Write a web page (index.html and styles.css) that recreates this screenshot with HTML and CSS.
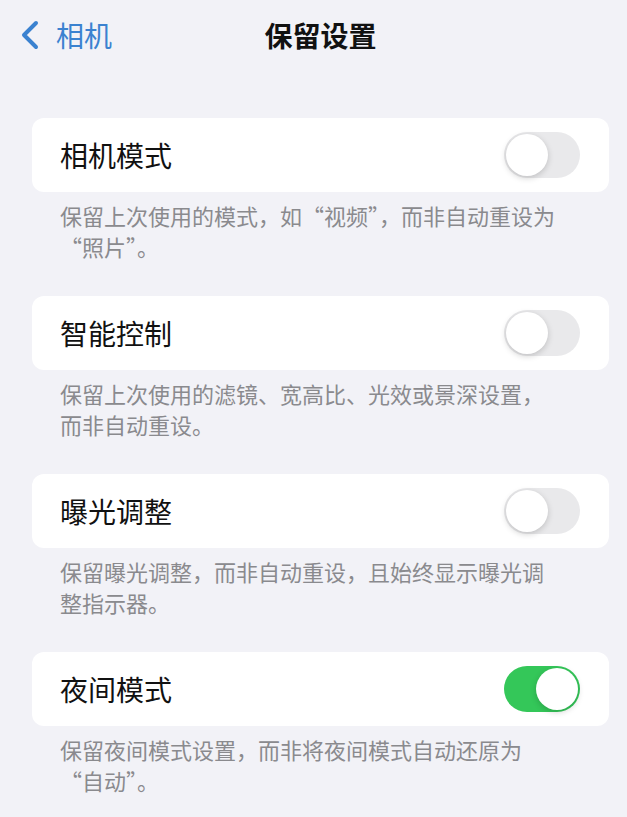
FILE: index.html
```html
<!DOCTYPE html>
<html lang="zh-CN">
<head>
    <meta charset="UTF-8">
    <meta name="viewport" content="width=device-width, initial-scale=1.0">
    <title>保留设置</title>
    <link rel="stylesheet" href="styles.css">
</head>
<body>
    <header class="nav">
        <a class="back" href="#">
            <svg class="chevron" width="20" height="30" viewBox="0 0 20 30">
                <path d="M16 3 L4 15 L16 27" fill="none" stroke="currentColor" stroke-width="4" stroke-linecap="round" stroke-linejoin="round"/>
            </svg>
            <span>相机</span>
        </a>
        <h1 class="title">保留设置</h1>
    </header>

    <main class="list">
        <section class="group">
            <div class="card">
                <span class="label">相机模式</span>
                <span class="toggle"><span class="knob"></span></span>
            </div>
            <p class="note">保留上次使用的模式，如“视频”，而非自动重设为<br>“照片”。</p>
        </section>

        <section class="group">
            <div class="card">
                <span class="label">智能控制</span>
                <span class="toggle"><span class="knob"></span></span>
            </div>
            <p class="note">保留上次使用的滤镜、宽高比、光效或景深设置，<br>而非自动重设。</p>
        </section>

        <section class="group">
            <div class="card">
                <span class="label">曝光调整</span>
                <span class="toggle"><span class="knob"></span></span>
            </div>
            <p class="note">保留曝光调整，而非自动重设，且始终显示曝光调<br>整指示器。</p>
        </section>

        <section class="group">
            <div class="card">
                <span class="label">夜间模式</span>
                <span class="toggle on"><span class="knob"></span></span>
            </div>
            <p class="note">保留夜间模式设置，而非将夜间模式自动还原为<br>“自动”。</p>
        </section>
    </main>
</body>
</html>
```

FILE: styles.css
```css
body {
    background-color: #f2f2f7;
    margin: 0;
    padding: 0 18px 0 32px;
    font-family: "Noto Sans CJK SC", "Noto Sans", sans-serif;
    color: #111;
}
.nav {
    position: relative;
    height: 70px;
    display: flex;
    align-items: center;
    justify-content: center;
}
.back {
    position: absolute;
    left: -12px;
    top: 18px;
    display: flex;
    align-items: center;
    gap: 16px;
    color: #3b82d0;
    text-decoration: none;
    font-size: 28px;
    line-height: 34px;
}
.title {
    margin: 0;
    font-size: 28px;
    font-weight: 700;
    line-height: 34px;
}
.list {
    padding-top: 48px;
}
.group {
    margin-bottom: 34px;
}
.card {
    background-color: white;
    border-radius: 12px;
    height: 74px;
    padding: 0 29px 0 28px;
    display: flex;
    align-items: center;
    justify-content: space-between;
}
.label {
    font-size: 28px;
}
.toggle {
    width: 76px;
    height: 46px;
    border-radius: 23px;
    background-color: #e9e9eb;
    position: relative;
}
.knob {
    position: absolute;
    top: 2px;
    left: 2px;
    width: 42px;
    height: 42px;
    border-radius: 50%;
    background-color: white;
    box-shadow: 0 2px 6px rgba(0, 0, 0, 0.18);
}
.toggle.on {
    background-color: #34c759;
}
.toggle.on .knob {
    left: 32px;
}
.note {
    margin: 0;
    padding: 8px 28px 0;
    font-size: 22px;
    line-height: 31px;
    color: #8a8a8e;
}
```
